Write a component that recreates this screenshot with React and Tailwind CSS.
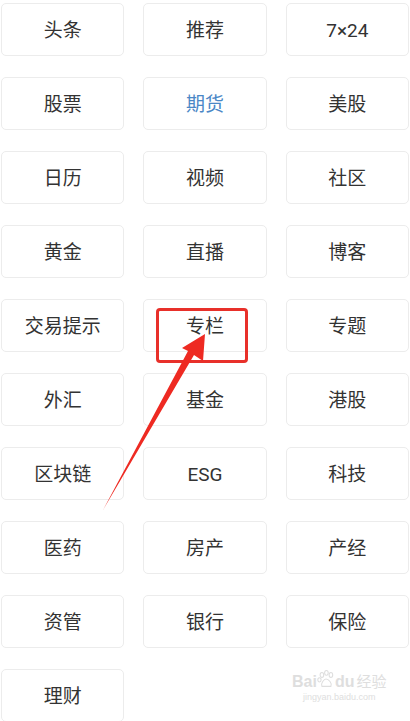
import React from 'react';

const items = [
  '头条', '推荐', '7×24',
  '股票', '期货', '美股',
  '日历', '视频', '社区',
  '黄金', '直播', '博客',
  '交易提示', '专栏', '专题',
  '外汇', '基金', '港股',
  '区块链', 'ESG', '科技',
  '医药', '房产', '产经',
  '资管', '银行', '保险',
  '理财',
];

const Tile = ({ label }) => (
  <div
    className={`h-[53px] flex items-center justify-center pt-[3px] rounded-[5px] border border-[#ececec] bg-white text-[19px] ${
      label === '期货' ? 'text-[#4a87c6]' : 'text-[#333333]'
    }`}
  >
    {label}
  </div>
);

export default function App() {
  return (
    <div
      className="relative w-[410px] h-[721px] overflow-hidden bg-white"
      style={{ fontFamily: 'Roboto, "Noto Sans CJK SC", sans-serif' }}
    >
      <div className="grid grid-cols-3 gap-x-[19px] gap-y-[21px] px-[1px] pt-[3px]">
        {items.map(label => (
          <Tile key={label} label={label} />
        ))}
      </div>

      {/* highlight box */}
      <div className="absolute left-[156px] top-[308px] w-[92px] h-[55px] rounded-[4px] border-[3px] border-[#e8302a]" />

      {/* arrow */}
      <svg className="absolute left-0 top-0 pointer-events-none" width="410" height="721">
        <polygon
          points="205,334 182,348 188,351 103,510 194,355 203,361"
          fill="#ee2a22"
        />
      </svg>

      {/* watermark */}
      <div className="absolute left-[292px] top-[668px] flex flex-col items-center whitespace-nowrap text-[#dedede] pointer-events-none">
        <div className="flex items-end leading-none">
          <span className="text-[16px] font-bold" style={{ fontFamily: 'Arial, "Liberation Sans", sans-serif' }}>Bai</span>
          <svg width="18" height="22" viewBox="0 0 22 22">
            <g fill="none" stroke="#dedede" strokeWidth="1.3">
              <ellipse cx="6" cy="6" rx="2.2" ry="3" />
              <ellipse cx="11.5" cy="3.5" rx="2.2" ry="3" />
              <ellipse cx="17" cy="6" rx="2.2" ry="3" />
              <ellipse cx="3" cy="12" rx="2" ry="2.6" />
              <path d="M6 20 C4 16 9 11 11 11 C14 11 19 16 17 20 Z" />
            </g>
          </svg>
          <span className="text-[16px] font-bold" style={{ fontFamily: 'Arial, "Liberation Sans", sans-serif' }}>du</span>
          <span className="text-[15px] ml-[2px]">经验</span>
        </div>
        <span className="text-[9px] leading-none mt-[3px]" style={{ fontFamily: 'Arial, "Liberation Sans", sans-serif' }}>jingyan.baidu.com</span>
      </div>
    </div>
  );
}
